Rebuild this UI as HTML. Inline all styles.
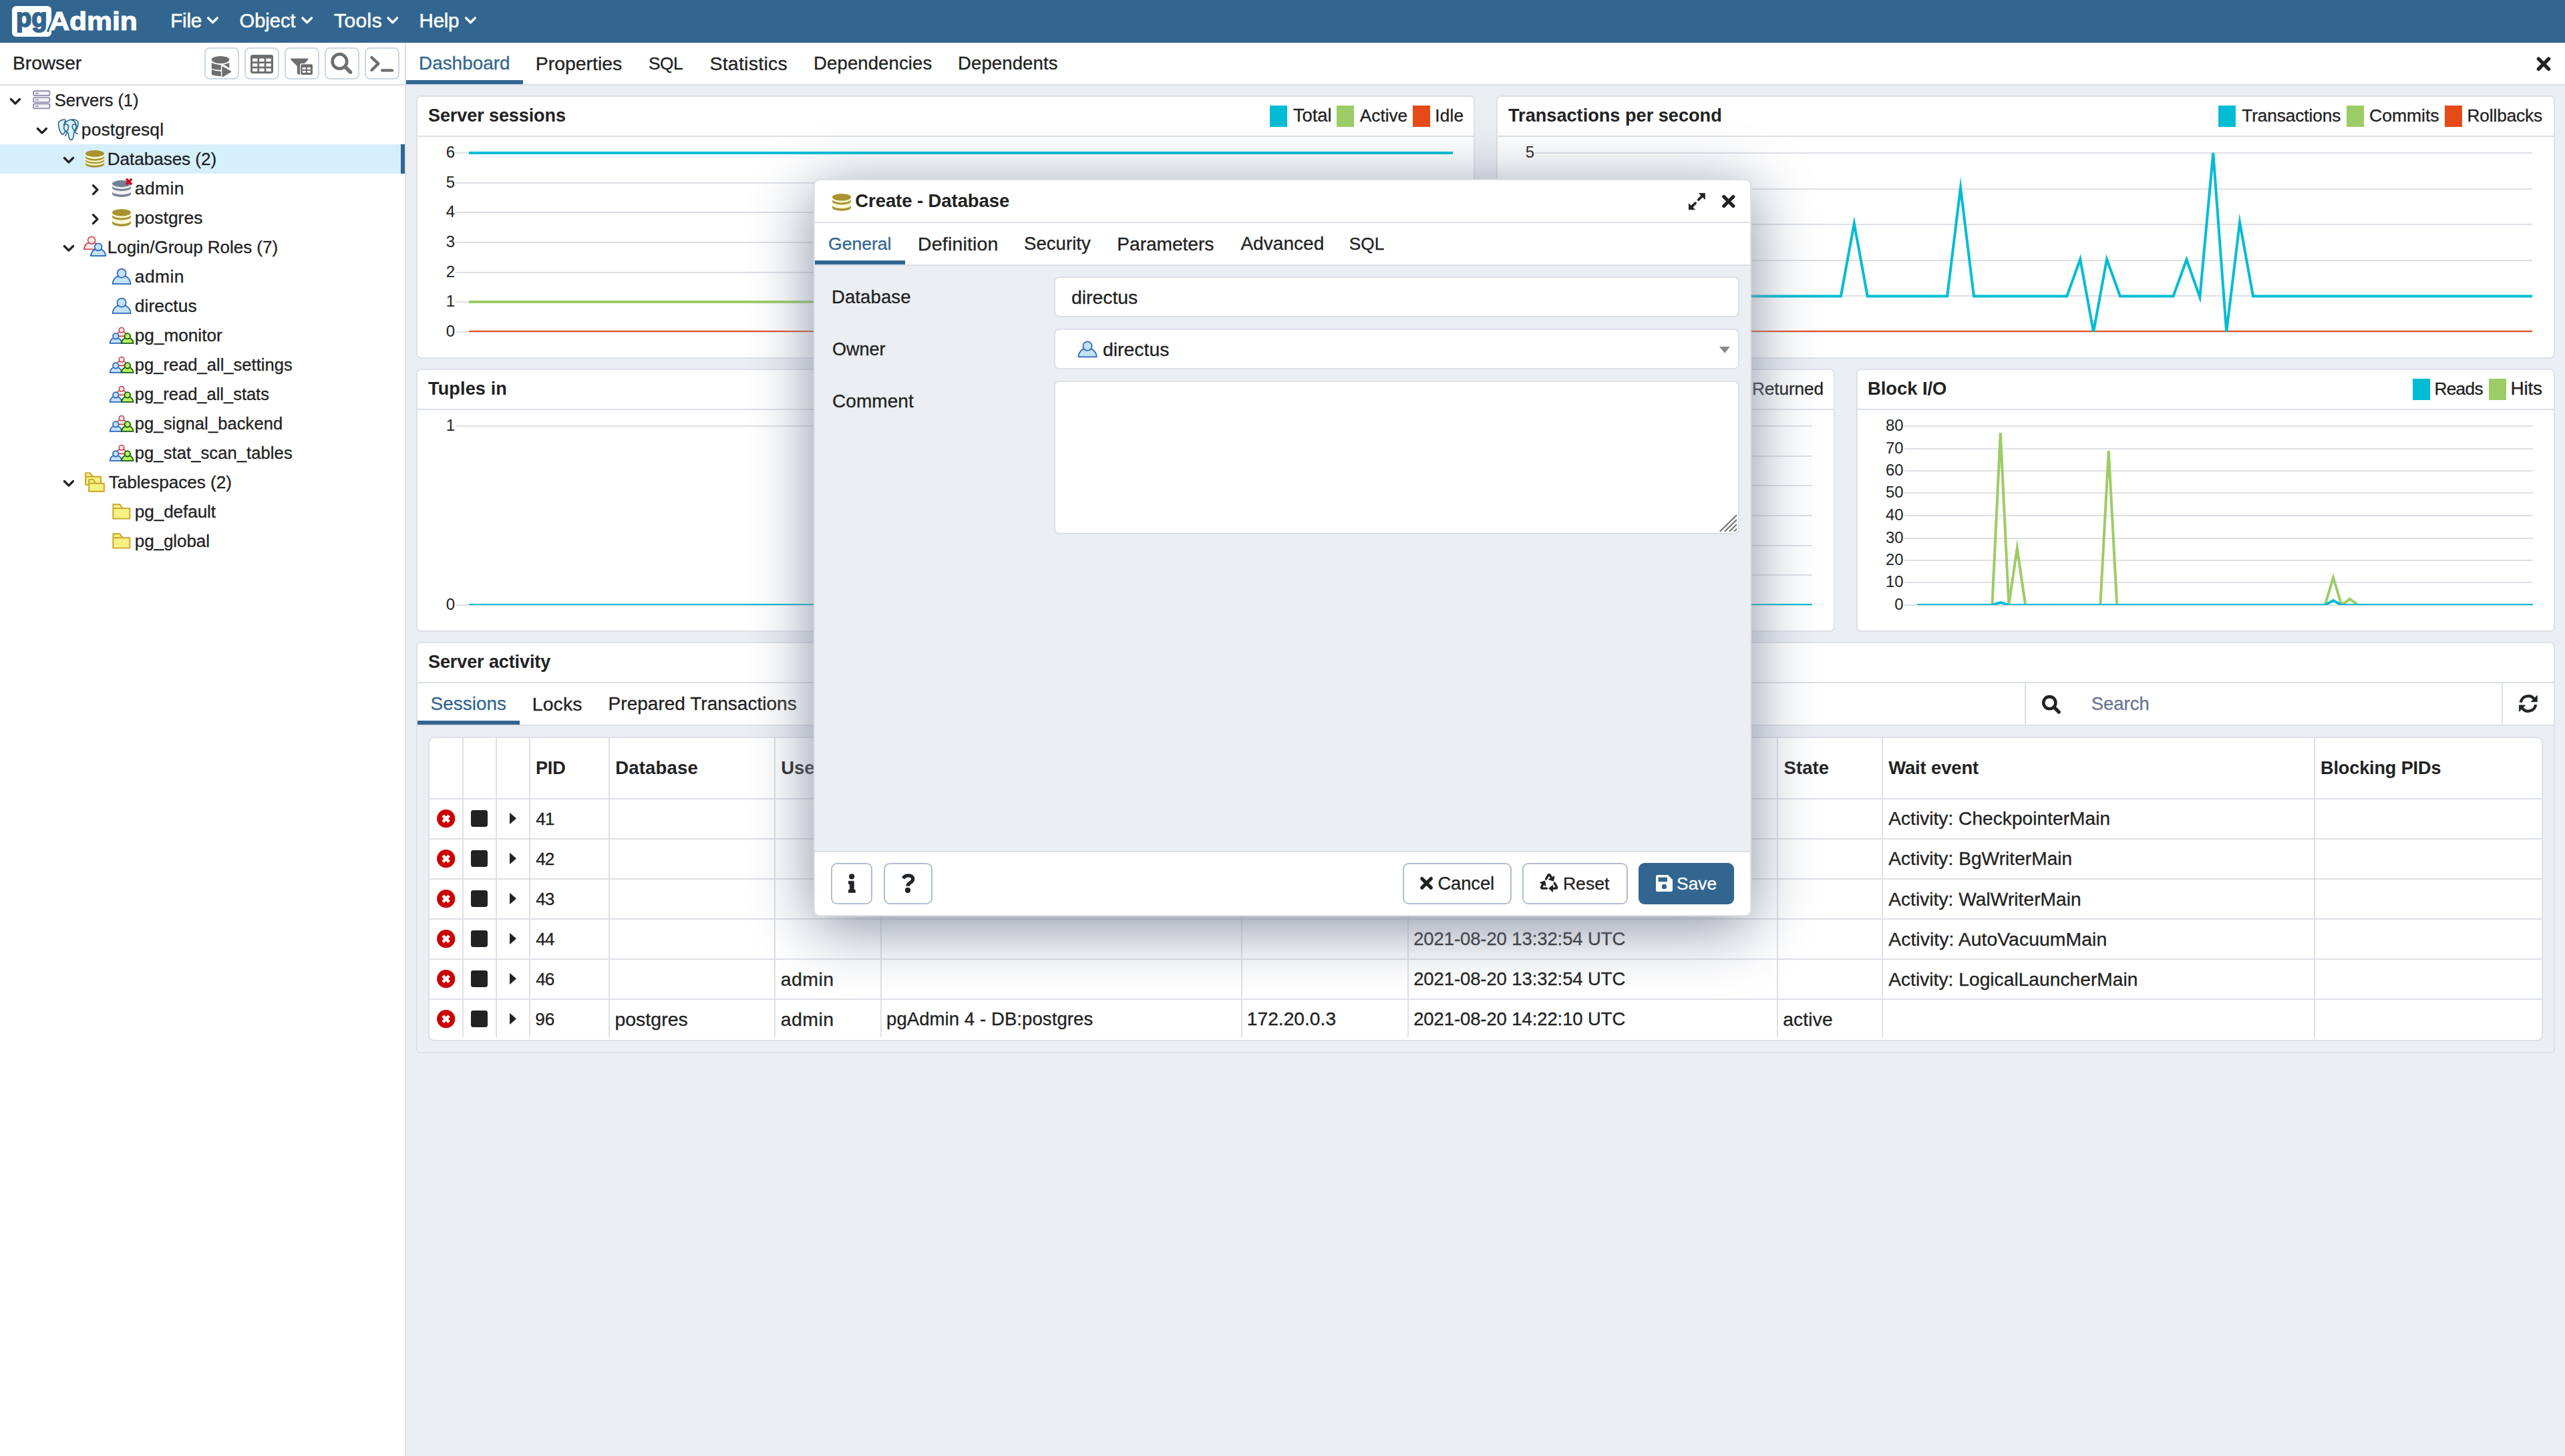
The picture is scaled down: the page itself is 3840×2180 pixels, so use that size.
<!DOCTYPE html>
<html>
<head>
<meta charset="utf-8">
<title>pgAdmin 4</title>
<style>
*{box-sizing:border-box;}
html,body{margin:0;padding:0;}
html{overflow:hidden;background:#ebeef3;}
body{width:3840px;height:2180px;overflow:hidden;background:#ebeef3;font-family:"Liberation Sans",sans-serif;font-size:27.5px;color:#222;position:relative;}
.abs{position:absolute;}
svg{display:block;overflow:visible;}
.t{position:absolute;white-space:pre;-webkit-text-stroke:0.3px currentColor;}
.t.b{-webkit-text-stroke:0;}
#hdr{position:absolute;left:0;top:0;width:3840px;height:64px;background:#326690;}
#logo{position:absolute;left:17.6px;top:8.6px;width:59.2px;height:46.4px;background:#fff;border-radius:6px;}
#left{position:absolute;left:0;top:64px;width:608px;height:2116px;background:#fff;border-right:2px solid #dde0e6;}
#ltitle{position:absolute;left:0;top:64px;width:606px;height:64px;border-bottom:2px solid #dde0e6;}
.tb{position:absolute;width:52px;height:48px;border:2px solid #cdd7e1;border-radius:8px;background:#fff;}
#tabs{position:absolute;left:608px;top:64px;width:3232px;height:64px;background:#fff;border-bottom:2px solid #dde0e6;}
.ul{position:absolute;height:6px;background:#326690;}
.card{position:absolute;background:#fff;border:2px solid #dde0e6;border-radius:7px;}
.ax{font-family:"Liberation Sans",sans-serif;font-size:24px;fill:#222;}

</style>
</head>
<body>
<div id="hdr">
<div id="logo"></div>
<svg class="abs" style="left:0;top:0" width="240" height="64"><text x="23.9" y="39.9" font-family="Liberation Sans" font-weight="700" font-size="39" fill="#326690" stroke="#326690" stroke-width="1.9" textLength="46.6" lengthAdjust="spacingAndGlyphs">pg</text><path d="M71.4 47.6 L84 18" stroke="#326690" stroke-width="3.4" fill="none"/><text x="73.4" y="44.6" font-family="Liberation Sans" font-weight="700" font-size="38.5" fill="#fff" stroke="#fff" stroke-width="1.1" textLength="132.4" lengthAdjust="spacingAndGlyphs">Admin</text></svg>
<span class="t" style="left:255.30px;top:11.20px;line-height:40px;font-size:29.53px;letter-spacing:-0.248px;color:#fff;-webkit-text-stroke:0.55px #fff;">File</span>
<svg class="abs" style="left:0;top:0" width="1" height="1"><path d="M311.75 26.93 L318.50 33.67 L325.25 26.93" fill="none" stroke="#fff" stroke-width="3.5" stroke-linecap="round" stroke-linejoin="round"/></svg>
<span class="t" style="left:358.60px;top:11.20px;line-height:40px;font-size:29px;letter-spacing:0.029px;color:#fff;-webkit-text-stroke:0.55px #fff;">Object</span>
<svg class="abs" style="left:0;top:0" width="1" height="1"><path d="M452.95 26.93 L459.70 33.67 L466.45 26.93" fill="none" stroke="#fff" stroke-width="3.5" stroke-linecap="round" stroke-linejoin="round"/></svg>
<span class="t" style="left:500.00px;top:11.20px;line-height:40px;font-size:30.01px;letter-spacing:0.417px;color:#fff;-webkit-text-stroke:0.55px #fff;">Tools</span>
<svg class="abs" style="left:0;top:0" width="1" height="1"><path d="M581.05 26.93 L587.80 33.67 L594.55 26.93" fill="none" stroke="#fff" stroke-width="3.5" stroke-linecap="round" stroke-linejoin="round"/></svg>
<span class="t" style="left:627.60px;top:11.20px;line-height:40px;font-size:29.51px;letter-spacing:-0.255px;color:#fff;-webkit-text-stroke:0.55px #fff;">Help</span>
<svg class="abs" style="left:0;top:0" width="1" height="1"><path d="M697.65 26.93 L704.40 33.67 L711.15 26.93" fill="none" stroke="#fff" stroke-width="3.5" stroke-linecap="round" stroke-linejoin="round"/></svg></div>
<div id="left"></div>
<div id="ltitle"></div>
<span class="t" style="left:19.00px;top:75.00px;line-height:40px;font-size:28.09px;letter-spacing:0.029px;">Browser</span>
<div class="tb" style="left:306px;top:71px"></div>
<svg class="abs" style="left:306px;top:71px" width="52" height="48" viewBox="0 0 52 48"><ellipse cx="24.05" cy="18.5" rx="13.25" ry="5.5" fill="#6e6e6e"/><path d="M10.8 23.1 Q24.05 29.3 37.3 23.1 V32 Q24.05 35.6 10.8 32 Z" fill="#6e6e6e"/><path d="M10.8 33.1 Q24.05 38.5 37.3 33.1 V39.6 Q37.3 41.2 35.6 41.6 Q24.05 44.6 12.4 41.6 Q10.8 41.2 10.8 39.6 Z" fill="#6e6e6e"/><path d="M24.9 24 L27 24.6 L41.6 33.4 V46 H24.9 Z" fill="#fff"/><path d="M27.1 29.2 L39.5 36.2 L27.1 43.6 Z" fill="#6e6e6e" stroke="#6e6e6e" stroke-width="1.6" stroke-linejoin="round"/></svg>
<div class="tb" style="left:366px;top:71px"></div>
<svg class="abs" style="left:366px;top:71px" width="52" height="48" viewBox="0 0 52 48"><rect x="9" y="11" width="34" height="28" rx="3" fill="#6e6e6e"/><rect x="12.0" y="16.6" width="7.4" height="4.6" fill="#fff"/><rect x="22.2" y="16.6" width="7.4" height="4.6" fill="#fff"/><rect x="32.4" y="16.6" width="7.4" height="4.6" fill="#fff"/><rect x="12.0" y="24.0" width="7.4" height="4.6" fill="#fff"/><rect x="22.2" y="24.0" width="7.4" height="4.6" fill="#fff"/><rect x="32.4" y="24.0" width="7.4" height="4.6" fill="#fff"/><rect x="12.0" y="31.400000000000002" width="7.4" height="4.6" fill="#fff"/><rect x="22.2" y="31.400000000000002" width="7.4" height="4.6" fill="#fff"/><rect x="32.4" y="31.400000000000002" width="7.4" height="4.6" fill="#fff"/></svg>
<div class="tb" style="left:426px;top:71px"></div>
<svg class="abs" style="left:426px;top:71px" width="52" height="48" viewBox="0 0 52 48"><path d="M10.2 16.6 H34.2 C35.4 16.6 35.8 17.6 35 18.5 L25.6 28.4 H23 V40.9 L20 40 C19.2 39.6 18.8 39 18.8 38.2 V28 L9.4 18.5 C8.6 17.6 9 16.6 10.2 16.6 Z" fill="#6e6e6e"/><rect x="23.0" y="24.0" width="20.2" height="18.1" rx="2.6" fill="#fff"/><rect x="24.2" y="25.2" width="17.8" height="15.7" rx="1.8" fill="#6e6e6e"/><rect x="26.6" y="30.0" width="5.2" height="2.9" fill="#fff"/><rect x="33.800000000000004" y="30.0" width="5.2" height="2.9" fill="#fff"/><rect x="26.6" y="34.9" width="5.2" height="2.9" fill="#fff"/><rect x="33.800000000000004" y="34.9" width="5.2" height="2.9" fill="#fff"/></svg>
<div class="tb" style="left:486px;top:71px"></div>
<svg class="abs" style="left:486px;top:71px" width="52" height="48" viewBox="0 0 52 48"><circle cx="22.4" cy="21" r="10.8" fill="none" stroke="#6e6e6e" stroke-width="4.7"/><path d="M30.2 28.8 L39.4 37.8" stroke="#6e6e6e" stroke-width="5.6" stroke-linecap="butt" fill="none"/><circle cx="39.2" cy="37.6" r="2.2" fill="#6e6e6e"/></svg>
<div class="tb" style="left:546px;top:71px"></div>
<svg class="abs" style="left:546px;top:71px" width="52" height="48" viewBox="0 0 52 48"><path d="M10.5 15 L20.4 24.4 L10.5 33.8" stroke="#6e6e6e" stroke-width="4.4" stroke-linecap="round" stroke-linejoin="round" fill="none"/><path d="M26.2 34.4 H41.1" stroke="#6e6e6e" stroke-width="4.4" stroke-linecap="round" fill="none"/></svg>
<svg class="abs" style="left:0;top:0" width="1" height="1"><path d="M16.35 148.53 L22.90 155.08 L29.45 148.53" fill="none" stroke="#222" stroke-width="3.3" stroke-linecap="round" stroke-linejoin="round"/></svg>
<svg class="abs" style="left:48.6px;top:135px" width="28" height="30" viewBox="0 0 28 30"><rect x="1" y="1.2" width="24.5" height="7" rx="2.4" fill="#f2f2f2" stroke="#8a85ad" stroke-width="1.7"/><rect x="4.2" y="3.9000000000000004" width="4.6" height="1.6" fill="#8a85ad"/><rect x="1" y="11.0" width="24.5" height="7" rx="2.4" fill="#f2f2f2" stroke="#8a85ad" stroke-width="1.7"/><rect x="4.2" y="13.7" width="4.6" height="1.6" fill="#8a85ad"/><rect x="1" y="20.4" width="24.5" height="7" rx="2.4" fill="#f2f2f2" stroke="#8a85ad" stroke-width="1.7"/><rect x="4.2" y="23.099999999999998" width="4.6" height="1.6" fill="#8a85ad"/></svg>
<span class="t" style="left:81.80px;top:129.80px;line-height:40px;font-size:25.5px;letter-spacing:-0.041px;">Servers (1)</span>
<svg class="abs" style="left:0;top:0" width="1" height="1"><path d="M56.35 192.53 L62.90 199.08 L69.45 192.53" fill="none" stroke="#222" stroke-width="3.3" stroke-linecap="round" stroke-linejoin="round"/></svg>
<svg class="abs" style="left:86.50px;top:178.10px" width="31" height="32.2" viewBox="0 0 31 32.2"><path d="M11.00 2.30 C10.17 0.77 10.23 0.73 7.10 1.40 C3.97 2.07 3.77 1.87 1.60 4.30 C-0.57 6.73 0.57 5.30 0.60 8.70 C0.63 12.10 0.73 10.87 1.70 14.50 C2.67 18.13 2.00 16.77 3.50 19.60 C5.00 22.43 4.40 22.37 6.20 23.00 C8.00 23.63 7.50 22.83 8.90 21.50 C10.30 20.17 10.37 22.17 10.40 19.00 C10.43 15.83 9.27 16.33 9.00 12.00 C8.73 7.67 8.93 9.23 9.60 6.00 C10.27 2.77 11.83 3.83 11.00 2.30 Z" fill="#dff3fb" stroke="#2c6a96" stroke-width="1.7" stroke-linejoin="round" stroke-linecap="round"/><path d="M20.70 1.60 C20.70 0.37 22.23 0.63 25.00 1.30 C27.77 1.97 27.37 1.70 29.00 3.60 C30.63 5.50 29.90 4.17 29.90 7.00 C29.90 9.83 29.80 9.20 29.00 12.10 C28.20 15.00 28.47 14.00 27.50 15.70 C26.53 17.40 26.30 18.77 26.10 17.20 C25.90 15.63 27.27 15.07 26.90 11.00 C26.53 6.93 27.07 8.13 25.00 5.00 C22.93 1.87 20.70 2.83 20.70 1.60 Z" fill="#dff3fb" stroke="#2c6a96" stroke-width="1.7" stroke-linejoin="round" stroke-linecap="round"/><path d="M16.80 1.70 C13.13 3.00 13.23 2.93 10.60 6.00 C7.97 9.07 9.37 7.67 8.90 10.90 C8.43 14.13 8.30 13.10 9.20 15.70 C10.10 18.30 9.78 16.90 11.60 18.70 C13.42 20.50 13.22 19.07 14.65 21.10 C16.08 23.13 15.28 22.27 15.90 24.80 C16.52 27.33 15.50 26.50 16.50 28.70 C17.50 30.90 17.20 31.00 18.90 31.40 C20.60 31.80 20.20 31.80 21.60 29.90 C23.00 28.00 22.40 28.63 23.10 25.70 C23.80 22.77 23.10 23.63 23.70 21.10 C24.30 18.57 24.00 20.10 24.90 18.10 C25.80 16.10 25.70 17.50 26.40 15.10 C27.10 12.70 27.40 14.13 27.00 10.90 C26.60 7.67 27.00 8.33 25.20 5.40 C23.40 2.47 24.40 3.33 21.60 2.10 C18.80 0.87 20.47 0.40 16.80 1.70 Z" fill="#dff3fb" stroke="#2c6a96" stroke-width="1.7" stroke-linejoin="round" stroke-linecap="round"/><path d="M9.80 8.60 C10.80 8.47 10.97 7.63 12.80 8.20 C14.63 8.77 14.47 8.60 15.30 10.30 C16.13 12.00 15.73 11.10 15.30 13.30 C14.87 15.50 14.83 14.87 14.00 16.90 C13.17 18.93 13.20 18.57 12.80 19.40" fill="none" stroke="#2c6a96" stroke-width="1.7" stroke-linejoin="round" stroke-linecap="round"/><path d="M25.60 8.60 C24.60 8.57 24.03 7.73 22.60 8.50 C21.17 9.27 21.43 8.90 21.30 10.90 C21.17 12.90 21.20 12.30 22.20 14.50 C23.20 16.70 23.17 16.27 24.30 17.50 C25.43 18.73 25.17 17.97 25.60 18.20" fill="none" stroke="#2c6a96" stroke-width="1.7" stroke-linejoin="round" stroke-linecap="round"/><path d="M12.8 21.1 Q12.4 23.6 10.7 25.1 M24.9 19 Q26.4 21.4 28.9 22.4" fill="none" stroke="#2c6a96" stroke-width="1.7" stroke-linejoin="round" stroke-linecap="round"/></svg>
<span class="t" style="left:121.80px;top:173.80px;line-height:40px;font-size:26.39px;letter-spacing:0.175px;">postgresql</span>
<div class="abs" style="left:0;top:216px;width:606px;height:44px;background:#d6effc;border-right:6px solid #326690"></div>
<svg class="abs" style="left:0;top:0" width="1" height="1"><path d="M96.35 236.53 L102.90 243.08 L109.45 236.53" fill="none" stroke="#222" stroke-width="3.3" stroke-linecap="round" stroke-linejoin="round"/></svg>
<svg class="abs" style="left:128px;top:225.00px" width="28" height="25.8" viewBox="0 0 28 26" preserveAspectRatio="none"><path d="M0 14 V20.9 A14 5.1 0 0 0 28 20.9 V14 Z" fill="#a9922f"/><path d="M0 12 V17.9 A14 5.1 0 0 0 28 17.9 V12 Z" fill="#fafad2"/><path d="M0 10 V15.3 A14 5.1 0 0 0 28 15.3 V10 Z" fill="#a9922f"/><path d="M0 8 V13.1 A14 5.1 0 0 0 28 13.1 V8 Z" fill="#fafad2"/><path d="M0 6 V10.7 A14 5.1 0 0 0 28 10.7 V6 Z" fill="#a9922f"/><path d="M0 4.9 V8.0 A14 5.1 0 0 0 28 8.0 V4.9 Z" fill="#fafad2"/><ellipse cx="14" cy="5.0" rx="14" ry="5.0" fill="#a9922f"/></svg>
<span class="t" style="left:160.80px;top:217.80px;line-height:40px;font-size:26.14px;letter-spacing:-0.065px;">Databases (2)</span>
<svg class="abs" style="left:0;top:0" width="1" height="1"><path d="M139.45 277.65 L145.90 284.10 L139.45 290.55" fill="none" stroke="#222" stroke-width="3.3" stroke-linecap="round" stroke-linejoin="round"/></svg>
<svg class="abs" style="left:167.5px;top:270.00px" width="28" height="25" viewBox="0 0 28 26" preserveAspectRatio="none"><path d="M0 12 V20.8 A14 5.1 0 0 0 28 20.8 V12 Z" fill="#718294"/><path d="M0 10 V17.3 A14 5.1 0 0 0 28 17.3 V10 Z" fill="#f2f2f2"/><path d="M0 6 V11.5 A14 5.1 0 0 0 28 11.5 V6 Z" fill="#718294"/><path d="M0 5 V8.4 A14 5.1 0 0 0 28 8.4 V5 Z" fill="#f2f2f2"/><ellipse cx="14" cy="5.3" rx="14" ry="5.25" fill="#718294"/><path d="M21 -2.2 L29.2 6.4 M29.2 -2.2 L21 6.4" stroke="#d6001c" stroke-width="3.5" fill="none"/></svg>
<span class="t" style="left:201.80px;top:261.80px;line-height:40px;font-size:26.39px;letter-spacing:0.433px;">admin</span>
<svg class="abs" style="left:0;top:0" width="1" height="1"><path d="M139.45 321.65 L145.90 328.10 L139.45 334.55" fill="none" stroke="#222" stroke-width="3.3" stroke-linecap="round" stroke-linejoin="round"/></svg>
<svg class="abs" style="left:168px;top:313.00px" width="28" height="26.0" viewBox="0 0 28 26" preserveAspectRatio="none"><path d="M0 12 V20.8 A14 5.1 0 0 0 28 20.8 V12 Z" fill="#a9922f"/><path d="M0 10 V17.3 A14 5.1 0 0 0 28 17.3 V10 Z" fill="#fafad2"/><path d="M0 6 V11.5 A14 5.1 0 0 0 28 11.5 V6 Z" fill="#a9922f"/><path d="M0 5 V8.4 A14 5.1 0 0 0 28 8.4 V5 Z" fill="#fafad2"/><ellipse cx="14" cy="5.3" rx="14" ry="5.25" fill="#a9922f"/></svg>
<span class="t" style="left:201.80px;top:305.80px;line-height:40px;font-size:26.39px;letter-spacing:0.061px;">postgres</span>
<svg class="abs" style="left:0;top:0" width="1" height="1"><path d="M96.35 368.52 L102.90 375.07 L109.45 368.52" fill="none" stroke="#222" stroke-width="3.3" stroke-linecap="round" stroke-linejoin="round"/></svg>
<svg class="abs" style="left:0;top:0" width="1" height="1"><path d="M125.90 373.20 A11.20 10.75 0 0 1 148.30 373.20 Z" fill="#fdeaea" stroke="#c9404a" stroke-width="1.6" stroke-linejoin="miter"/><circle cx="137.10" cy="359.76" r="5.49" fill="#fdeaea" stroke="#c9404a" stroke-width="1.6"/><path d="M136.00 383.10 A11.10 10.66 0 0 1 158.20 383.10 Z" fill="#c3e3f3" stroke="#2b63c4" stroke-width="1.7" stroke-linejoin="miter"/><circle cx="147.10" cy="369.78" r="5.44" fill="#c3e3f3" stroke="#2b63c4" stroke-width="1.7"/></svg>
<span class="t" style="left:160.80px;top:349.80px;line-height:40px;font-size:26.04px;letter-spacing:-0.042px;">Login/Group Roles (7)</span>
<svg class="abs" style="left:0;top:0" width="1" height="1"><path d="M168.65 425.20 A13.40 12.86 0 0 1 195.45 425.20 Z" fill="#c3e3f3" stroke="#2b63c4" stroke-width="1.7" stroke-linejoin="miter"/><circle cx="182.05" cy="409.12" r="6.57" fill="#c3e3f3" stroke="#2b63c4" stroke-width="1.7"/></svg>
<span class="t" style="left:201.80px;top:393.80px;line-height:40px;font-size:26.39px;letter-spacing:0.433px;">admin</span>
<svg class="abs" style="left:0;top:0" width="1" height="1"><path d="M168.65 469.20 A13.40 12.86 0 0 1 195.45 469.20 Z" fill="#c3e3f3" stroke="#2b63c4" stroke-width="1.7" stroke-linejoin="miter"/><circle cx="182.05" cy="453.12" r="6.57" fill="#c3e3f3" stroke="#2b63c4" stroke-width="1.7"/></svg>
<span class="t" style="left:201.80px;top:437.80px;line-height:40px;font-size:26.39px;letter-spacing:0.062px;">directus</span>
<svg class="abs" style="left:0;top:0" width="1" height="1"><path d="M174.40 503.40 A7.60 7.30 0 0 1 189.60 503.40 Z" fill="#fdeaea" stroke="#c9404a" stroke-width="1.6" stroke-linejoin="miter"/><circle cx="182.00" cy="494.28" r="3.72" fill="#fdeaea" stroke="#c9404a" stroke-width="1.6"/><path d="M164.60 513.80 A8.70 8.35 0 0 1 182.00 513.80 Z" fill="#c3e3f3" stroke="#2b63c4" stroke-width="1.8" stroke-linejoin="miter"/><circle cx="173.30" cy="503.36" r="4.26" fill="#c3e3f3" stroke="#2b63c4" stroke-width="1.8"/><path d="M182.10 513.80 A8.70 8.35 0 0 1 199.50 513.80 Z" fill="#bdf55f" stroke="#0d5a0a" stroke-width="1.8" stroke-linejoin="miter"/><circle cx="190.80" cy="503.36" r="4.26" fill="#bdf55f" stroke="#0d5a0a" stroke-width="1.8"/></svg>
<span class="t" style="left:201.80px;top:481.80px;line-height:40px;font-size:26.13px;letter-spacing:0.022px;">pg_monitor</span>
<svg class="abs" style="left:0;top:0" width="1" height="1"><path d="M174.40 547.40 A7.60 7.30 0 0 1 189.60 547.40 Z" fill="#fdeaea" stroke="#c9404a" stroke-width="1.6" stroke-linejoin="miter"/><circle cx="182.00" cy="538.28" r="3.72" fill="#fdeaea" stroke="#c9404a" stroke-width="1.6"/><path d="M164.60 557.80 A8.70 8.35 0 0 1 182.00 557.80 Z" fill="#c3e3f3" stroke="#2b63c4" stroke-width="1.8" stroke-linejoin="miter"/><circle cx="173.30" cy="547.36" r="4.26" fill="#c3e3f3" stroke="#2b63c4" stroke-width="1.8"/><path d="M182.10 557.80 A8.70 8.35 0 0 1 199.50 557.80 Z" fill="#bdf55f" stroke="#0d5a0a" stroke-width="1.8" stroke-linejoin="miter"/><circle cx="190.80" cy="547.36" r="4.26" fill="#bdf55f" stroke="#0d5a0a" stroke-width="1.8"/></svg>
<span class="t" style="left:201.80px;top:525.80px;line-height:40px;font-size:25.5px;letter-spacing:0.027px;">pg_read_all_settings</span>
<svg class="abs" style="left:0;top:0" width="1" height="1"><path d="M174.40 591.40 A7.60 7.30 0 0 1 189.60 591.40 Z" fill="#fdeaea" stroke="#c9404a" stroke-width="1.6" stroke-linejoin="miter"/><circle cx="182.00" cy="582.28" r="3.72" fill="#fdeaea" stroke="#c9404a" stroke-width="1.6"/><path d="M164.60 601.80 A8.70 8.35 0 0 1 182.00 601.80 Z" fill="#c3e3f3" stroke="#2b63c4" stroke-width="1.8" stroke-linejoin="miter"/><circle cx="173.30" cy="591.36" r="4.26" fill="#c3e3f3" stroke="#2b63c4" stroke-width="1.8"/><path d="M182.10 601.80 A8.70 8.35 0 0 1 199.50 601.80 Z" fill="#bdf55f" stroke="#0d5a0a" stroke-width="1.8" stroke-linejoin="miter"/><circle cx="190.80" cy="591.36" r="4.26" fill="#bdf55f" stroke="#0d5a0a" stroke-width="1.8"/></svg>
<span class="t" style="left:201.80px;top:569.80px;line-height:40px;font-size:25.5px;letter-spacing:-0.010px;">pg_read_all_stats</span>
<svg class="abs" style="left:0;top:0" width="1" height="1"><path d="M174.40 635.40 A7.60 7.30 0 0 1 189.60 635.40 Z" fill="#fdeaea" stroke="#c9404a" stroke-width="1.6" stroke-linejoin="miter"/><circle cx="182.00" cy="626.28" r="3.72" fill="#fdeaea" stroke="#c9404a" stroke-width="1.6"/><path d="M164.60 645.80 A8.70 8.35 0 0 1 182.00 645.80 Z" fill="#c3e3f3" stroke="#2b63c4" stroke-width="1.8" stroke-linejoin="miter"/><circle cx="173.30" cy="635.36" r="4.26" fill="#c3e3f3" stroke="#2b63c4" stroke-width="1.8"/><path d="M182.10 645.80 A8.70 8.35 0 0 1 199.50 645.80 Z" fill="#bdf55f" stroke="#0d5a0a" stroke-width="1.8" stroke-linejoin="miter"/><circle cx="190.80" cy="635.36" r="4.26" fill="#bdf55f" stroke="#0d5a0a" stroke-width="1.8"/></svg>
<span class="t" style="left:201.80px;top:613.80px;line-height:40px;font-size:25.5px;letter-spacing:0.101px;">pg_signal_backend</span>
<svg class="abs" style="left:0;top:0" width="1" height="1"><path d="M174.40 679.40 A7.60 7.30 0 0 1 189.60 679.40 Z" fill="#fdeaea" stroke="#c9404a" stroke-width="1.6" stroke-linejoin="miter"/><circle cx="182.00" cy="670.28" r="3.72" fill="#fdeaea" stroke="#c9404a" stroke-width="1.6"/><path d="M164.60 689.80 A8.70 8.35 0 0 1 182.00 689.80 Z" fill="#c3e3f3" stroke="#2b63c4" stroke-width="1.8" stroke-linejoin="miter"/><circle cx="173.30" cy="679.36" r="4.26" fill="#c3e3f3" stroke="#2b63c4" stroke-width="1.8"/><path d="M182.10 689.80 A8.70 8.35 0 0 1 199.50 689.80 Z" fill="#bdf55f" stroke="#0d5a0a" stroke-width="1.8" stroke-linejoin="miter"/><circle cx="190.80" cy="679.36" r="4.26" fill="#bdf55f" stroke="#0d5a0a" stroke-width="1.8"/></svg>
<span class="t" style="left:201.80px;top:657.80px;line-height:40px;font-size:25.5px;letter-spacing:0.107px;">pg_stat_scan_tables</span>
<svg class="abs" style="left:0;top:0" width="1" height="1"><path d="M96.35 720.52 L102.90 727.07 L109.45 720.52" fill="none" stroke="#222" stroke-width="3.3" stroke-linecap="round" stroke-linejoin="round"/></svg>
<svg class="abs" style="left:0;top:0" width="1" height="1"><path d="M128.15 725.90 V708.10 H134.75 L138.95 713.70 H151.05 V725.90 Z" fill="#f5f282" stroke="#c9a227" stroke-width="1.9" stroke-linejoin="round"/><path d="M128.15 713.70 H138.95" stroke="#c9a227" stroke-width="1.9" fill="none"/><path d="M133.15 735.80 V718.10 H139.55 L143.75 723.70 H155.85 V735.80 Z" fill="#f5f282" stroke="#c9a227" stroke-width="1.9" stroke-linejoin="round"/><path d="M133.15 723.70 H143.75" stroke="#c9a227" stroke-width="1.9" fill="none"/></svg>
<span class="t" style="left:162.80px;top:701.80px;line-height:40px;font-size:26.2px;letter-spacing:-0.053px;">Tablespaces (2)</span>
<svg class="abs" style="left:0;top:0" width="1" height="1"><path d="M169.35 776.60 V755.20 H179.32 L183.75 761.10 H194.35 V776.60 Z" fill="#f5f282" stroke="#c9a227" stroke-width="1.9" stroke-linejoin="round"/><path d="M169.35 761.10 H183.75" stroke="#c9a227" stroke-width="1.9" fill="none"/></svg>
<span class="t" style="left:201.80px;top:745.80px;line-height:40px;font-size:26.14px;letter-spacing:-0.085px;">pg_default</span>
<svg class="abs" style="left:0;top:0" width="1" height="1"><path d="M169.35 820.60 V799.20 H179.32 L183.75 805.10 H194.35 V820.60 Z" fill="#f5f282" stroke="#c9a227" stroke-width="1.9" stroke-linejoin="round"/><path d="M169.35 805.10 H183.75" stroke="#c9a227" stroke-width="1.9" fill="none"/></svg>
<span class="t" style="left:201.80px;top:789.80px;line-height:40px;font-size:26.08px;letter-spacing:-0.115px;">pg_global</span>
<div id="tabs"></div>
<div class="ul" style="left:608px;top:120px;width:175px"></div>
<span class="t" style="left:627.00px;top:75.00px;line-height:40px;font-size:27.87px;letter-spacing:0.025px;color:#326690;">Dashboard</span>
<span class="t" style="left:801.80px;top:75.00px;line-height:40px;font-size:28.46px;letter-spacing:-0.028px;">Properties</span>
<span class="t" style="left:971.00px;top:75.00px;line-height:40px;font-size:26.26px;letter-spacing:-0.463px;">SQL</span>
<span class="t" style="left:1062.40px;top:75.00px;line-height:40px;font-size:28.46px;letter-spacing:0.276px;">Statistics</span>
<span class="t" style="left:1218.10px;top:75.00px;line-height:40px;font-size:27.5px;letter-spacing:0.112px;">Dependencies</span>
<span class="t" style="left:1434.00px;top:75.00px;line-height:40px;font-size:27.5px;letter-spacing:0.127px;">Dependents</span>
<svg class="abs" style="left:0;top:0" width="1" height="1"><path d="M3800.4 88.2 L3815.6 103.39999999999999 M3815.6 88.2 L3800.4 103.39999999999999" stroke="#222" stroke-width="5.4" stroke-linecap="round" fill="none"/></svg>
<div class="card" style="left:623.00px;top:143px;width:1585.00px;height:394px"></div>
<div class="abs" style="left:625.00px;top:203px;width:1581.00px;height:2px;background:#dde0e6"></div>
<span class="t b" style="left:641.00px;top:153.40px;line-height:40px;font-size:27.09px;font-weight:700;letter-spacing:-0.127px;">Server sessions</span>
<div class="abs" style="left:1901.0px;top:158px;width:26px;height:32px;background:#00bcd4"></div>
<span class="t" style="left:1936.00px;top:153.20px;line-height:40px;font-size:27.5px;letter-spacing:-0.145px;">Total</span>
<div class="abs" style="left:2001.0px;top:158px;width:26px;height:32px;background:#9ccc65"></div>
<span class="t" style="left:2035.80px;top:153.20px;line-height:40px;font-size:26.26px;letter-spacing:-0.017px;">Active</span>
<div class="abs" style="left:2115.0px;top:158px;width:26px;height:32px;background:#e64a19"></div>
<span class="t" style="left:2148.30px;top:153.20px;line-height:40px;font-size:26.26px;letter-spacing:0.125px;">Idle</span>
<svg class="abs" style="left:0;top:0" width="3840" height="1000"><rect x="682" y="228" width="1493.00" height="2" fill="#dde0e6"/><text x="681.2" y="236.20" text-anchor="end" class="ax">6</text><rect x="682" y="273" width="1493.00" height="2" fill="#dde0e6"/><text x="681.2" y="281.20" text-anchor="end" class="ax">5</text><rect x="682" y="317" width="1493.00" height="2" fill="#dde0e6"/><text x="681.2" y="325.20" text-anchor="end" class="ax">4</text><rect x="682" y="362" width="1493.00" height="2" fill="#dde0e6"/><text x="681.2" y="370.20" text-anchor="end" class="ax">3</text><rect x="682" y="407" width="1493.00" height="2" fill="#dde0e6"/><text x="681.2" y="415.20" text-anchor="end" class="ax">2</text><rect x="682" y="451" width="1493.00" height="2" fill="#dde0e6"/><text x="681.2" y="459.20" text-anchor="end" class="ax">1</text><rect x="682" y="496" width="1493.00" height="2" fill="#dde0e6"/><text x="681.2" y="504.20" text-anchor="end" class="ax">0</text><clipPath id="c1"><rect x="700" y="227" width="1477.00" height="270"/></clipPath><g clip-path="url(#c1)"><path d="M702.00 497.00 L2175.00 497.00" fill="none" stroke="#e64a19" stroke-width="4" stroke-linejoin="miter" stroke-miterlimit="10"/><path d="M702.00 452.00 L2175.00 452.00" fill="none" stroke="#9ccc65" stroke-width="4" stroke-linejoin="miter" stroke-miterlimit="10"/><path d="M702.00 229.00 L2175.00 229.00" fill="none" stroke="#00bcd4" stroke-width="4" stroke-linejoin="miter" stroke-miterlimit="10"/></g></svg>
<div class="card" style="left:2240.00px;top:143px;width:1585.00px;height:394px"></div>
<div class="abs" style="left:2242.00px;top:203px;width:1581.00px;height:2px;background:#dde0e6"></div>
<span class="t b" style="left:2258.00px;top:153.40px;line-height:40px;font-size:27.16px;font-weight:700;letter-spacing:-0.007px;">Transactions per second</span>
<div class="abs" style="left:3321.0px;top:158px;width:26px;height:32px;background:#00bcd4"></div>
<span class="t" style="left:3356.30px;top:153.20px;line-height:40px;font-size:26.26px;letter-spacing:-0.116px;">Transactions</span>
<div class="abs" style="left:3512.8px;top:158px;width:26px;height:32px;background:#9ccc65"></div>
<span class="t" style="left:3547.00px;top:153.20px;line-height:40px;font-size:26.62px;letter-spacing:-0.059px;">Commits</span>
<div class="abs" style="left:3660.3px;top:158px;width:26px;height:32px;background:#e64a19"></div>
<span class="t" style="left:3693.50px;top:153.20px;line-height:40px;font-size:26.26px;letter-spacing:-0.133px;">Rollbacks</span>
<svg class="abs" style="left:0;top:0" width="3840" height="1000"><rect x="2298" y="228" width="1493.00" height="2" fill="#dde0e6"/><text x="2297.2" y="236.20" text-anchor="end" class="ax">5</text><rect x="2298" y="282" width="1493.00" height="2" fill="#dde0e6"/><text x="2297.2" y="290.20" text-anchor="end" class="ax">4</text><rect x="2298" y="335" width="1493.00" height="2" fill="#dde0e6"/><text x="2297.2" y="343.20" text-anchor="end" class="ax">3</text><rect x="2298" y="389" width="1493.00" height="2" fill="#dde0e6"/><text x="2297.2" y="397.20" text-anchor="end" class="ax">2</text><rect x="2298" y="442" width="1493.00" height="2" fill="#dde0e6"/><text x="2297.2" y="450.20" text-anchor="end" class="ax">1</text><rect x="2298" y="496" width="1493.00" height="2" fill="#dde0e6"/><text x="2297.2" y="504.20" text-anchor="end" class="ax">0</text><clipPath id="c2"><rect x="2316" y="227" width="1477.00" height="270"/></clipPath><g clip-path="url(#c2)"><path d="M2318.00 497.00 L3791.00 497.00" fill="none" stroke="#e64a19" stroke-width="4" stroke-linejoin="miter" stroke-miterlimit="10"/><path d="M2318.00 443.40 L2337.91 443.40 L2357.81 443.40 L2377.72 443.40 L2397.62 443.40 L2417.53 389.80 L2437.43 443.40 L2457.34 443.40 L2477.24 443.40 L2497.15 443.40 L2517.05 443.40 L2536.96 443.40 L2556.86 443.40 L2576.77 336.20 L2596.68 443.40 L2616.58 443.40 L2636.49 443.40 L2656.39 443.40 L2676.30 443.40 L2696.20 443.40 L2716.11 443.40 L2736.01 443.40 L2755.92 443.40 L2775.82 334.59 L2795.73 443.40 L2815.64 443.40 L2835.54 443.40 L2855.45 443.40 L2875.35 443.40 L2895.26 443.40 L2915.16 443.40 L2935.07 280.99 L2954.97 443.40 L2974.88 443.40 L2994.78 443.40 L3014.69 443.40 L3034.59 443.40 L3054.50 443.40 L3074.41 443.40 L3094.31 443.40 L3114.22 388.19 L3134.12 497.00 L3154.03 388.19 L3173.93 443.40 L3193.84 443.40 L3213.74 443.40 L3233.65 443.40 L3253.55 443.40 L3273.46 388.73 L3293.36 445.01 L3313.27 229.00 L3333.18 497.00 L3353.08 332.98 L3372.99 443.40 L3392.89 443.40 L3412.80 443.40 L3432.70 443.40 L3452.61 443.40 L3472.51 443.40 L3492.42 443.40 L3512.32 443.40 L3532.23 443.40 L3552.14 443.40 L3572.04 443.40 L3591.95 443.40 L3611.85 443.40 L3631.76 443.40 L3651.66 443.40 L3671.57 443.40 L3691.47 443.40 L3711.38 443.40 L3731.28 443.40 L3751.19 443.40 L3771.09 443.40 L3791.00 443.40" fill="none" stroke="#00bcd4" stroke-width="4" stroke-linejoin="miter" stroke-miterlimit="10"/></g></svg>
<div class="card" style="left:623.00px;top:552px;width:1046.00px;height:394px"></div>
<div class="abs" style="left:625.00px;top:612px;width:1042.00px;height:2px;background:#dde0e6"></div>
<span class="t b" style="left:641.00px;top:562.40px;line-height:40px;font-size:27.14px;font-weight:700;letter-spacing:0.103px;">Tuples in</span>
<svg class="abs" style="left:0;top:0" width="3840" height="1000"><rect x="682" y="637" width="953.00" height="2" fill="#dde0e6"/><text x="681.2" y="645.20" text-anchor="end" class="ax">1</text><rect x="682" y="905" width="953.00" height="2" fill="#dde0e6"/><text x="681.2" y="913.20" text-anchor="end" class="ax">0</text><clipPath id="c3"><rect x="700" y="636" width="937.00" height="270"/></clipPath><g clip-path="url(#c3)"><path d="M702.00 906.00 L1635.00 906.00" fill="none" stroke="#00bcd4" stroke-width="4" stroke-linejoin="miter" stroke-miterlimit="10"/></g></svg>
<div class="card" style="left:1701.00px;top:552px;width:1046.00px;height:394px"></div>
<div class="abs" style="left:1703.00px;top:612px;width:1042.00px;height:2px;background:#dde0e6"></div>
<span class="t b" style="left:1719.00px;top:562.40px;line-height:40px;font-size:27.5px;font-weight:700;">Tuples out</span>
<div class="abs" style="left:2440.0px;top:567px;width:26px;height:32px;background:#00bcd4"></div>
<span class="t" style="left:2473.00px;top:562.20px;line-height:40px;font-size:27.5px;">Fetched</span>
<div class="abs" style="left:2590.0px;top:567px;width:26px;height:32px;background:#9ccc65"></div>
<span class="t" style="left:2623.00px;top:562.20px;line-height:40px;font-size:26.26px;letter-spacing:-0.127px;">Returned</span>
<svg class="abs" style="left:0;top:0" width="3840" height="1000"><rect x="1779" y="637" width="934.00" height="2" fill="#dde0e6"/><rect x="1779" y="682" width="934.00" height="2" fill="#dde0e6"/><rect x="1779" y="726" width="934.00" height="2" fill="#dde0e6"/><rect x="1779" y="771" width="934.00" height="2" fill="#dde0e6"/><rect x="1779" y="816" width="934.00" height="2" fill="#dde0e6"/><rect x="1779" y="860" width="934.00" height="2" fill="#dde0e6"/><rect x="1779" y="905" width="934.00" height="2" fill="#dde0e6"/><clipPath id="c4"><rect x="1797" y="636" width="918.00" height="270"/></clipPath><g clip-path="url(#c4)"><path d="M1799.00 906.00 L2713.00 906.00" fill="none" stroke="#00bcd4" stroke-width="4" stroke-linejoin="miter" stroke-miterlimit="10"/></g></svg>
<div class="card" style="left:2779.00px;top:552px;width:1046.00px;height:394px"></div>
<div class="abs" style="left:2781.00px;top:612px;width:1042.00px;height:2px;background:#dde0e6"></div>
<span class="t b" style="left:2796.00px;top:562.40px;line-height:40px;font-size:27.5px;font-weight:700;letter-spacing:-0.101px;">Block I/O</span>
<div class="abs" style="left:3612.0px;top:567px;width:26px;height:32px;background:#00bcd4"></div>
<span class="t" style="left:3644.40px;top:562.20px;line-height:40px;font-size:26.26px;letter-spacing:-0.688px;">Reads</span>
<div class="abs" style="left:3726.0px;top:567px;width:26px;height:32px;background:#9ccc65"></div>
<span class="t" style="left:3758.50px;top:562.20px;line-height:40px;font-size:28.05px;letter-spacing:-0.259px;">Hits</span>
<svg class="abs" style="left:0;top:0" width="3840" height="1000"><rect x="2851" y="637" width="941.00" height="2" fill="#dde0e6"/><text x="2849.6" y="645.20" text-anchor="end" class="ax">80</text><rect x="2851" y="671" width="941.00" height="2" fill="#dde0e6"/><text x="2849.6" y="679.20" text-anchor="end" class="ax">70</text><rect x="2851" y="704" width="941.00" height="2" fill="#dde0e6"/><text x="2849.6" y="712.20" text-anchor="end" class="ax">60</text><rect x="2851" y="737" width="941.00" height="2" fill="#dde0e6"/><text x="2849.6" y="745.20" text-anchor="end" class="ax">50</text><rect x="2851" y="771" width="941.00" height="2" fill="#dde0e6"/><text x="2849.6" y="779.20" text-anchor="end" class="ax">40</text><rect x="2851" y="805" width="941.00" height="2" fill="#dde0e6"/><text x="2849.6" y="813.20" text-anchor="end" class="ax">30</text><rect x="2851" y="838" width="941.00" height="2" fill="#dde0e6"/><text x="2849.6" y="846.20" text-anchor="end" class="ax">20</text><rect x="2851" y="871" width="941.00" height="2" fill="#dde0e6"/><text x="2849.6" y="879.20" text-anchor="end" class="ax">10</text><rect x="2851" y="905" width="941.00" height="2" fill="#dde0e6"/><text x="2849.6" y="913.20" text-anchor="end" class="ax">0</text><clipPath id="c5"><rect x="2868.3" y="636" width="925.70" height="270"/></clipPath><g clip-path="url(#c5)"><path d="M2870.30 906.00 L2882.76 906.00 L2895.21 906.00 L2907.67 906.00 L2920.12 906.00 L2932.58 906.00 L2945.03 906.00 L2957.49 906.00 L2969.94 906.00 L2982.40 906.00 L2994.85 648.05 L3007.31 906.00 L3019.76 820.91 L3032.22 906.00 L3044.68 906.00 L3057.13 906.00 L3069.59 906.00 L3082.04 906.00 L3094.50 906.00 L3106.95 906.00 L3119.41 906.00 L3131.86 906.00 L3144.32 906.00 L3156.77 674.85 L3169.23 906.00 L3181.69 906.00 L3194.14 906.00 L3206.60 906.00 L3219.05 906.00 L3231.51 906.00 L3243.96 906.00 L3256.42 906.00 L3268.87 906.00 L3281.33 906.00 L3293.78 906.00 L3306.24 906.00 L3318.69 906.00 L3331.15 906.00 L3343.61 906.00 L3356.06 906.00 L3368.52 906.00 L3380.97 906.00 L3393.43 906.00 L3405.88 906.00 L3418.34 906.00 L3430.79 906.00 L3443.25 906.00 L3455.70 906.00 L3468.16 906.00 L3480.61 906.00 L3493.07 864.79 L3505.53 906.00 L3517.98 896.79 L3530.44 906.00 L3542.89 906.00 L3555.35 906.00 L3567.80 906.00 L3580.26 906.00 L3592.71 906.00 L3605.17 906.00 L3617.62 906.00 L3630.08 906.00 L3642.54 906.00 L3654.99 906.00 L3667.45 906.00 L3679.90 906.00 L3692.36 906.00 L3704.81 906.00 L3717.27 906.00 L3729.72 906.00 L3742.18 906.00 L3754.63 906.00 L3767.09 906.00 L3779.54 906.00 L3792.00 906.00" fill="none" stroke="#9ccc65" stroke-width="4" stroke-linejoin="miter" stroke-miterlimit="10"/><path d="M2870.30 906.00 L2882.76 906.00 L2895.21 906.00 L2907.67 906.00 L2920.12 906.00 L2932.58 906.00 L2945.03 906.00 L2957.49 906.00 L2969.94 906.00 L2982.40 906.00 L2994.85 901.98 L3007.31 906.00 L3019.76 906.00 L3032.22 906.00 L3044.68 906.00 L3057.13 906.00 L3069.59 906.00 L3082.04 906.00 L3094.50 906.00 L3106.95 906.00 L3119.41 906.00 L3131.86 906.00 L3144.32 906.00 L3156.77 906.00 L3169.23 906.00 L3181.69 906.00 L3194.14 906.00 L3206.60 906.00 L3219.05 906.00 L3231.51 906.00 L3243.96 906.00 L3256.42 906.00 L3268.87 906.00 L3281.33 906.00 L3293.78 906.00 L3306.24 906.00 L3318.69 906.00 L3331.15 906.00 L3343.61 906.00 L3356.06 906.00 L3368.52 906.00 L3380.97 906.00 L3393.43 906.00 L3405.88 906.00 L3418.34 906.00 L3430.79 906.00 L3443.25 906.00 L3455.70 906.00 L3468.16 906.00 L3480.61 906.00 L3493.07 899.10 L3505.53 906.00 L3517.98 906.00 L3530.44 906.00 L3542.89 906.00 L3555.35 906.00 L3567.80 906.00 L3580.26 906.00 L3592.71 906.00 L3605.17 906.00 L3617.62 906.00 L3630.08 906.00 L3642.54 906.00 L3654.99 906.00 L3667.45 906.00 L3679.90 906.00 L3692.36 906.00 L3704.81 906.00 L3717.27 906.00 L3729.72 906.00 L3742.18 906.00 L3754.63 906.00 L3767.09 906.00 L3779.54 906.00 L3792.00 906.00" fill="none" stroke="#00bcd4" stroke-width="4" stroke-linejoin="miter" stroke-miterlimit="10"/></g></svg>
<div class="card" style="left:623.00px;top:961px;width:3202.00px;height:616px"></div>
<div class="abs" style="left:625.00px;top:1021px;width:3198.00px;height:2px;background:#dde0e6"></div>
<span class="t b" style="left:641.00px;top:971.40px;line-height:40px;font-size:27.09px;font-weight:700;letter-spacing:-0.136px;">Server activity</span>
<div class="abs" style="left:625px;top:1023px;width:3198px;height:62px;background:#fff"></div>
<div class="abs" style="left:625px;top:1085px;width:3198px;height:2px;background:#dde0e6"></div>
<div class="abs" style="left:625px;top:1087px;width:3198px;height:488px;background:#ebeef3;border-radius:0 0 7px 7px"></div>
<div class="ul" style="left:625px;top:1079px;width:153px"></div>
<span class="t" style="left:644.50px;top:1033.80px;line-height:40px;font-size:27.92px;letter-spacing:0.031px;color:#326690;">Sessions</span>
<span class="t" style="left:796.70px;top:1033.80px;line-height:40px;font-size:28.46px;letter-spacing:0.125px;">Locks</span>
<span class="t" style="left:910.60px;top:1033.80px;line-height:40px;font-size:28.02px;letter-spacing:0.012px;">Prepared Transactions</span>
<span class="t" style="left:1232.00px;top:1034.20px;line-height:40px;font-size:27.5px;">Configuration</span>
<div class="abs" style="left:3031px;top:1023px;width:2px;height:62px;background:#dde0e6"></div>
<div class="abs" style="left:3745px;top:1023px;width:2px;height:62px;background:#dde0e6"></div>
<svg class="abs" style="left:0;top:0" width="1" height="1"><circle cx="3068.34" cy="1052.14" r="9.04" fill="none" stroke="#222" stroke-width="4.6"/><path d="M3075.39 1059.19 L3082.33 1066.13" stroke="#222" stroke-width="5.199999999999999" stroke-linecap="round"/></svg>
<span class="t" style="left:3130.80px;top:1034.10px;line-height:40px;font-size:27.5px;letter-spacing:-0.048px;color:#697690;">Search</span>
<svg class="abs" style="left:0;top:0" width="1" height="1"><path d="M3773.81 1051.83 A11.3 11.3 0 0 1 3793.90 1046.44" fill="none" stroke="#212529" stroke-width="4.2"/><path d="M3796.19 1054.97 A11.3 11.3 0 0 1 3776.10 1060.36" fill="none" stroke="#212529" stroke-width="4.2"/><path d="M3798.30 1041.30 V1050.70 H3789.10 Z" fill="#212529" stroke="#212529" stroke-width="0.8" stroke-linejoin="round"/><path d="M3771.40 1065.30 V1055.90 H3780.50 Z" fill="#212529" stroke="#212529" stroke-width="0.8" stroke-linejoin="round"/></svg>
<div class="abs" style="left:641px;top:1103px;width:3166px;height:456px;background:#fff;border:2px solid #dde0e6;border-radius:9px"></div>
<div class="abs" style="left:692.0px;top:1105px;width:2px;height:448px;background:#dde0e6"></div>
<div class="abs" style="left:742.0px;top:1105px;width:2px;height:448px;background:#dde0e6"></div>
<div class="abs" style="left:792.0px;top:1105px;width:2px;height:448px;background:#dde0e6"></div>
<div class="abs" style="left:911.0px;top:1105px;width:2px;height:448px;background:#dde0e6"></div>
<div class="abs" style="left:1159.0px;top:1105px;width:2px;height:448px;background:#dde0e6"></div>
<div class="abs" style="left:1318.4px;top:1105px;width:2px;height:448px;background:#dde0e6"></div>
<div class="abs" style="left:1858.0px;top:1105px;width:2px;height:448px;background:#dde0e6"></div>
<div class="abs" style="left:2107.0px;top:1105px;width:2px;height:448px;background:#dde0e6"></div>
<div class="abs" style="left:2660.0px;top:1105px;width:2px;height:448px;background:#dde0e6"></div>
<div class="abs" style="left:2817.0px;top:1105px;width:2px;height:448px;background:#dde0e6"></div>
<div class="abs" style="left:3464.0px;top:1105px;width:2px;height:448px;background:#dde0e6"></div>
<div class="abs" style="left:643px;top:1195px;width:3162px;height:2px;background:#dde0e6"></div>
<div class="abs" style="left:643px;top:1255px;width:3162px;height:2px;background:#dde0e6"></div>
<div class="abs" style="left:643px;top:1315px;width:3162px;height:2px;background:#dde0e6"></div>
<div class="abs" style="left:643px;top:1375px;width:3162px;height:2px;background:#dde0e6"></div>
<div class="abs" style="left:643px;top:1435px;width:3162px;height:2px;background:#dde0e6"></div>
<div class="abs" style="left:643px;top:1495px;width:3162px;height:2px;background:#dde0e6"></div>
<span class="t b" style="left:802.00px;top:1130.20px;line-height:40px;font-size:27.09px;font-weight:700;letter-spacing:-0.192px;">PID</span>
<span class="t b" style="left:921.20px;top:1130.20px;line-height:40px;font-size:27.5px;font-weight:700;letter-spacing:0.173px;">Database</span>
<span class="t b" style="left:1169.20px;top:1130.20px;line-height:40px;font-size:27.5px;font-weight:700;">User</span>
<span class="t b" style="left:1329.00px;top:1130.20px;line-height:40px;font-size:27.5px;font-weight:700;">Application</span>
<span class="t b" style="left:1868.00px;top:1130.20px;line-height:40px;font-size:27.5px;font-weight:700;">Client</span>
<span class="t b" style="left:2117.00px;top:1130.20px;line-height:40px;font-size:27.5px;font-weight:700;">Backend start</span>
<span class="t b" style="left:2670.60px;top:1130.20px;line-height:40px;font-size:27.5px;font-weight:700;letter-spacing:0.062px;">State</span>
<span class="t b" style="left:2827.20px;top:1130.20px;line-height:40px;font-size:27.5px;font-weight:700;letter-spacing:-0.161px;">Wait event</span>
<span class="t b" style="left:3474.00px;top:1130.20px;line-height:40px;font-size:27.09px;font-weight:700;letter-spacing:-0.134px;">Blocking PIDs</span>
<svg class="abs" style="left:653.5px;top:1211.8px" width="28" height="28" viewBox="0 0 28 28"><circle cx="13.7" cy="13.7" r="13.6" fill="#cc0000"/><path d="M9.1 9.1 L18.3 18.3 M18.3 9.1 L9.1 18.3" stroke="#fff" stroke-width="4.7" stroke-linecap="butt"/></svg>
<div class="abs" style="left:705.4px;top:1213.2px;width:24.6px;height:24.6px;border-radius:3.4px;background:#222"></div>
<svg class="abs" style="left:762.6px;top:1217.4px" width="10" height="17"><path d="M0.6 0.6 L9.4 8.4 L0.6 16.2 Z" fill="#222" stroke="#222" stroke-width="1" stroke-linejoin="round"/></svg>
<span class="t" style="left:802.20px;top:1206.20px;line-height:40px;font-size:26.26px;letter-spacing:-0.999px;">41</span>
<span class="t" style="left:2116.20px;top:1206.20px;line-height:40px;font-size:27.5px;letter-spacing:-0.107px;">2021-08-20 13:32:54 UTC</span>
<span class="t" style="left:2827.20px;top:1206.20px;line-height:40px;font-size:28.14px;letter-spacing:0.019px;">Activity: CheckpointerMain</span>
<svg class="abs" style="left:653.5px;top:1271.8px" width="28" height="28" viewBox="0 0 28 28"><circle cx="13.7" cy="13.7" r="13.6" fill="#cc0000"/><path d="M9.1 9.1 L18.3 18.3 M18.3 9.1 L9.1 18.3" stroke="#fff" stroke-width="4.7" stroke-linecap="butt"/></svg>
<div class="abs" style="left:705.4px;top:1273.2px;width:24.6px;height:24.6px;border-radius:3.4px;background:#222"></div>
<svg class="abs" style="left:762.6px;top:1277.4px" width="10" height="17"><path d="M0.6 0.6 L9.4 8.4 L0.6 16.2 Z" fill="#222" stroke="#222" stroke-width="1" stroke-linejoin="round"/></svg>
<span class="t" style="left:802.20px;top:1266.20px;line-height:40px;font-size:26.26px;letter-spacing:-0.999px;">42</span>
<span class="t" style="left:2116.20px;top:1266.20px;line-height:40px;font-size:27.5px;letter-spacing:-0.107px;">2021-08-20 13:32:54 UTC</span>
<span class="t" style="left:2827.20px;top:1266.20px;line-height:40px;font-size:28.14px;letter-spacing:0.024px;">Activity: BgWriterMain</span>
<svg class="abs" style="left:653.5px;top:1331.8px" width="28" height="28" viewBox="0 0 28 28"><circle cx="13.7" cy="13.7" r="13.6" fill="#cc0000"/><path d="M9.1 9.1 L18.3 18.3 M18.3 9.1 L9.1 18.3" stroke="#fff" stroke-width="4.7" stroke-linecap="butt"/></svg>
<div class="abs" style="left:705.4px;top:1333.2px;width:24.6px;height:24.6px;border-radius:3.4px;background:#222"></div>
<svg class="abs" style="left:762.6px;top:1337.4px" width="10" height="17"><path d="M0.6 0.6 L9.4 8.4 L0.6 16.2 Z" fill="#222" stroke="#222" stroke-width="1" stroke-linejoin="round"/></svg>
<span class="t" style="left:802.20px;top:1326.20px;line-height:40px;font-size:26.26px;letter-spacing:-0.999px;">43</span>
<span class="t" style="left:2116.20px;top:1326.20px;line-height:40px;font-size:27.5px;letter-spacing:-0.107px;">2021-08-20 13:32:54 UTC</span>
<span class="t" style="left:2827.20px;top:1326.20px;line-height:40px;font-size:28.18px;letter-spacing:0.021px;">Activity: WalWriterMain</span>
<svg class="abs" style="left:653.5px;top:1391.8px" width="28" height="28" viewBox="0 0 28 28"><circle cx="13.7" cy="13.7" r="13.6" fill="#cc0000"/><path d="M9.1 9.1 L18.3 18.3 M18.3 9.1 L9.1 18.3" stroke="#fff" stroke-width="4.7" stroke-linecap="butt"/></svg>
<div class="abs" style="left:705.4px;top:1393.2px;width:24.6px;height:24.6px;border-radius:3.4px;background:#222"></div>
<svg class="abs" style="left:762.6px;top:1397.4px" width="10" height="17"><path d="M0.6 0.6 L9.4 8.4 L0.6 16.2 Z" fill="#222" stroke="#222" stroke-width="1" stroke-linejoin="round"/></svg>
<span class="t" style="left:802.20px;top:1386.20px;line-height:40px;font-size:26.26px;letter-spacing:-0.999px;">44</span>
<span class="t" style="left:2116.20px;top:1386.20px;line-height:40px;font-size:27.5px;letter-spacing:-0.107px;">2021-08-20 13:32:54 UTC</span>
<span class="t" style="left:2827.20px;top:1386.20px;line-height:40px;font-size:28.43px;letter-spacing:0.025px;">Activity: AutoVacuumMain</span>
<svg class="abs" style="left:653.5px;top:1451.8px" width="28" height="28" viewBox="0 0 28 28"><circle cx="13.7" cy="13.7" r="13.6" fill="#cc0000"/><path d="M9.1 9.1 L18.3 18.3 M18.3 9.1 L9.1 18.3" stroke="#fff" stroke-width="4.7" stroke-linecap="butt"/></svg>
<div class="abs" style="left:705.4px;top:1453.2px;width:24.6px;height:24.6px;border-radius:3.4px;background:#222"></div>
<svg class="abs" style="left:762.6px;top:1457.4px" width="10" height="17"><path d="M0.6 0.6 L9.4 8.4 L0.6 16.2 Z" fill="#222" stroke="#222" stroke-width="1" stroke-linejoin="round"/></svg>
<span class="t" style="left:802.20px;top:1446.20px;line-height:40px;font-size:26.26px;letter-spacing:-0.999px;">46</span>
<span class="t" style="left:1168.80px;top:1446.20px;line-height:40px;font-size:28.46px;letter-spacing:0.457px;">admin</span>
<span class="t" style="left:2116.20px;top:1446.20px;line-height:40px;font-size:27.5px;letter-spacing:-0.107px;">2021-08-20 13:32:54 UTC</span>
<span class="t" style="left:2827.20px;top:1446.20px;line-height:40px;font-size:28.19px;letter-spacing:0.014px;">Activity: LogicalLauncherMain</span>
<svg class="abs" style="left:653.5px;top:1511.8px" width="28" height="28" viewBox="0 0 28 28"><circle cx="13.7" cy="13.7" r="13.6" fill="#cc0000"/><path d="M9.1 9.1 L18.3 18.3 M18.3 9.1 L9.1 18.3" stroke="#fff" stroke-width="4.7" stroke-linecap="butt"/></svg>
<div class="abs" style="left:705.4px;top:1513.2px;width:24.6px;height:24.6px;border-radius:3.4px;background:#222"></div>
<svg class="abs" style="left:762.6px;top:1517.4px" width="10" height="17"><path d="M0.6 0.6 L9.4 8.4 L0.6 16.2 Z" fill="#222" stroke="#222" stroke-width="1" stroke-linejoin="round"/></svg>
<span class="t" style="left:801.20px;top:1506.20px;line-height:40px;font-size:26.26px;">96</span>
<span class="t" style="left:920.40px;top:1506.20px;line-height:40px;font-size:28.46px;letter-spacing:0.028px;">postgres</span>
<span class="t" style="left:1168.80px;top:1506.20px;line-height:40px;font-size:28.46px;letter-spacing:0.457px;">admin</span>
<span class="t" style="left:1327.00px;top:1506.20px;line-height:40px;font-size:27.5px;letter-spacing:0.087px;">pgAdmin 4 - DB:postgres</span>
<span class="t" style="left:1866.80px;top:1506.20px;line-height:40px;font-size:28.13px;letter-spacing:0.034px;">172.20.0.3</span>
<span class="t" style="left:2116.20px;top:1506.20px;line-height:40px;font-size:27.5px;letter-spacing:-0.107px;">2021-08-20 14:22:10 UTC</span>
<span class="t" style="left:2669.30px;top:1506.20px;line-height:40px;font-size:28.3px;letter-spacing:0.083px;">active</span>
<div class="abs" style="left:1218px;top:268px;width:1404px;height:1104px;background:#ebeef3;border:2px solid #dde0e6;border-radius:9px;box-shadow:0 16px 96px #848ea0"></div>
<div class="abs" style="left:1220px;top:270px;width:1400px;height:62px;background:#fff;border-radius:7px 7px 0 0"></div>
<div class="abs" style="left:1220px;top:332px;width:1400px;height:2px;background:#dde0e6"></div>
<svg class="abs" style="left:1245.8px;top:289.90px" width="28" height="25.8" viewBox="0 0 28 26" preserveAspectRatio="none"><path d="M0 12 V20.8 A14 5.1 0 0 0 28 20.8 V12 Z" fill="#a9922f"/><path d="M0 10 V17.3 A14 5.1 0 0 0 28 17.3 V10 Z" fill="#fafad2"/><path d="M0 6 V11.5 A14 5.1 0 0 0 28 11.5 V6 Z" fill="#a9922f"/><path d="M0 5 V8.4 A14 5.1 0 0 0 28 8.4 V5 Z" fill="#fafad2"/><ellipse cx="14" cy="5.3" rx="14" ry="5.25" fill="#a9922f"/></svg>
<span class="t b" style="left:1280.30px;top:281.00px;line-height:40px;font-size:27.5px;font-weight:700;letter-spacing:-0.083px;">Create - Database</span>
<svg class="abs" style="left:2527.5px;top:288.9px" width="25" height="25" viewBox="0 0 25 25"><path d="M15.4 0.4 H24.4 V9.4 Z M0.4 15.8 V24.8 H9.4 Z" fill="#222" stroke="#222" stroke-width="0.8" stroke-linejoin="round"/><path d="M20.4 4.4 L14.8 10 M4.4 20.8 L10 15.2" stroke="#222" stroke-width="3.8" stroke-linecap="round" fill="none"/></svg>
<svg class="abs" style="left:0;top:0" width="1" height="1"><path d="M2580.8 294.5 L2594.8 308.5 M2594.8 294.5 L2580.8 308.5" stroke="#222" stroke-width="5.3" stroke-linecap="round" fill="none"/></svg>
<div class="abs" style="left:1220px;top:334px;width:1400px;height:62px;background:#fff"></div>
<div class="abs" style="left:1220px;top:396px;width:1400px;height:2px;background:#dde0e6"></div>
<div class="ul" style="left:1220px;top:390px;width:135px"></div>
<span class="t" style="left:1240.10px;top:345.30px;line-height:40px;font-size:26.54px;letter-spacing:-0.016px;color:#326690;">General</span>
<span class="t" style="left:1374.10px;top:345.30px;line-height:40px;font-size:28.46px;letter-spacing:0.189px;">Definition</span>
<span class="t" style="left:1533.00px;top:345.30px;line-height:40px;font-size:27.5px;letter-spacing:0.059px;">Security</span>
<span class="t" style="left:1672.30px;top:345.30px;line-height:40px;font-size:28.21px;letter-spacing:-0.074px;">Parameters</span>
<span class="t" style="left:1857.40px;top:345.30px;line-height:40px;font-size:28.02px;letter-spacing:0.039px;">Advanced</span>
<span class="t" style="left:2019.80px;top:345.30px;line-height:40px;font-size:26.26px;letter-spacing:-0.013px;">SQL</span>
<span class="t" style="left:1245.00px;top:424.80px;line-height:40px;font-size:27.5px;letter-spacing:0.110px;">Database</span>
<span class="t" style="left:1246.00px;top:503.00px;line-height:40px;font-size:27.04px;letter-spacing:-0.028px;">Owner</span>
<span class="t" style="left:1246.00px;top:581.00px;line-height:40px;font-size:28.04px;letter-spacing:0.031px;">Comment</span>
<div class="abs" style="left:1578.4px;top:414.2px;width:1025.4px;height:61px;background:#fff;border:2px solid #dde0e6;border-radius:8px"></div>
<span class="t" style="left:1603.90px;top:424.80px;line-height:40px;font-size:28.46px;letter-spacing:-0.029px;">directus</span>
<div class="abs" style="left:1578.4px;top:492.3px;width:1025.4px;height:61px;background:#fff;border:2px solid #dde0e6;border-radius:8px"></div>
<svg class="abs" style="left:0;top:0" width="1" height="1"><path d="M1614.45 534.40 A13.60 13.06 0 0 1 1641.65 534.40 Z" fill="#c3e3f3" stroke="#2b63c4" stroke-width="1.7" stroke-linejoin="miter"/><circle cx="1628.05" cy="518.08" r="6.66" fill="#c3e3f3" stroke="#2b63c4" stroke-width="1.7"/></svg>
<span class="t" style="left:1651.00px;top:503.00px;line-height:40px;font-size:28.46px;letter-spacing:-0.029px;">directus</span>
<svg class="abs" style="left:2574px;top:518.9px" width="16" height="10"><path d="M0 0 H16 L8 9.8 Z" fill="#888"/></svg>
<div class="abs" style="left:1578.4px;top:570.4px;width:1025.4px;height:229.5px;background:#fff;border:2px solid #dde0e6;border-radius:8px"></div>
<svg class="abs" style="left:0;top:0" width="1" height="1"><path d="M2575.4 795.3 L2599.4 771.7 M2582.5 795.3 L2599.4 778.7 M2589.5 795.3 L2599.4 785.7 M2596.5 795.3 L2599.4 792.6" stroke="#6e6e6e" stroke-width="1.9" stroke-linecap="round" fill="none"/></svg>
<div class="abs" style="left:1220px;top:1274px;width:1400px;height:2px;background:#dde0e6"></div>
<div class="abs" style="left:1220px;top:1276px;width:1400px;height:94px;background:#fff;border-radius:0 0 7px 7px"></div>
<div class="abs" style="left:1244px;top:1292px;width:62.4px;height:62px;background:#fff;border:2px solid #b3bdd1;border-radius:9px"></div>
<div class="abs" style="left:1323px;top:1292px;width:72.6px;height:62px;background:#fff;border:2px solid #b3bdd1;border-radius:9px"></div>
<div class="abs" style="left:2100.4px;top:1292px;width:162.4px;height:62px;background:#fff;border:2px solid #b3bdd1;border-radius:9px"></div>
<div class="abs" style="left:2279px;top:1292px;width:157.6px;height:62px;background:#fff;border:2px solid #b3bdd1;border-radius:9px"></div>
<div class="abs" style="left:2453px;top:1292px;width:143px;height:62px;background:#326690;border-radius:9px"></div>
<svg class="abs" style="left:0;top:0" width="1" height="1"><circle cx="1275.1" cy="1312.4" r="4.1" fill="#212529"/><path d="M1270.2 1319.2 H1278.4 V1332.2 H1280.4 V1336.5 H1270.2 V1332.2 H1272.2 V1323.6 H1270.2 Z" fill="#212529" stroke="#212529" stroke-width="0.6" stroke-linejoin="round"/></svg>
<svg class="abs" style="left:0;top:0" width="1" height="1"><path d="M1352.0 1315.0 C1354.2 1311.8 1356.8 1310.8 1360 1310.8 C1364.2 1310.8 1366.7 1313.2 1366.7 1316.2 C1366.7 1319 1364.8 1320.4 1362.6 1321.8 C1360.2 1323.2 1359 1324.4 1359 1326.8" fill="none" stroke="#212529" stroke-width="5.3" stroke-linejoin="round"/><circle cx="1359" cy="1332.9" r="4.1" fill="#212529"/></svg>
<svg class="abs" style="left:0;top:0" width="1" height="1"><path d="M2128.7999999999997 1315.6000000000001 L2142.4 1329.2 M2142.4 1315.6000000000001 L2128.7999999999997 1329.2" stroke="#222" stroke-width="5.2" stroke-linecap="round" fill="none"/></svg>
<span class="t" style="left:2152.40px;top:1302.60px;line-height:40px;font-size:27.5px;letter-spacing:-0.178px;">Cancel</span>
<svg class="abs" style="left:0;top:0" width="1" height="1"><g transform="translate(2319.1 1322.8000000000002) rotate(0) scale(1.27)"><path d="M-3.55 -5.35 L-1.25 -9.33 Q0 -11.5 1.25 -9.33 L3.0 -6.3" fill="none" stroke="#222" stroke-width="2.7" stroke-linejoin="round" stroke-linecap="round"/><path d="M5.1 -2.9 L6.2 -8.6 L-0.4 -4.8 Z" fill="#222" stroke="#222" stroke-width="0.8" stroke-linejoin="round"/></g><g transform="translate(2319.1 1322.8000000000002) rotate(120) scale(1.27)"><path d="M-3.55 -5.35 L-1.25 -9.33 Q0 -11.5 1.25 -9.33 L3.0 -6.3" fill="none" stroke="#222" stroke-width="2.7" stroke-linejoin="round" stroke-linecap="round"/><path d="M5.1 -2.9 L6.2 -8.6 L-0.4 -4.8 Z" fill="#222" stroke="#222" stroke-width="0.8" stroke-linejoin="round"/></g><g transform="translate(2319.1 1322.8000000000002) rotate(240) scale(1.27)"><path d="M-3.55 -5.35 L-1.25 -9.33 Q0 -11.5 1.25 -9.33 L3.0 -6.3" fill="none" stroke="#222" stroke-width="2.7" stroke-linejoin="round" stroke-linecap="round"/><path d="M5.1 -2.9 L6.2 -8.6 L-0.4 -4.8 Z" fill="#222" stroke="#222" stroke-width="0.8" stroke-linejoin="round"/></g></svg>
<span class="t" style="left:2339.90px;top:1302.60px;line-height:40px;font-size:26.68px;letter-spacing:-0.041px;">Reset</span>
<svg class="abs" style="left:2478.6px;top:1310.2px" width="25" height="25" viewBox="0 0 25 25"><path d="M2.6 0 H18 L25 7 V22.4 C25 23.8 23.8 25 22.4 25 H2.6 C1.2 25 0 23.8 0 22.4 V2.6 C0 1.2 1.2 0 2.6 0 Z" fill="#fff"/><rect x="3.6" y="3.6" width="13.4" height="6.6" fill="#326690"/><circle cx="12.5" cy="17.4" r="3.7" fill="#326690"/></svg>
<span class="t" style="left:2510.00px;top:1303.00px;line-height:40px;font-size:26.26px;letter-spacing:0.122px;color:#fff;">Save</span>
<script>(function(){var w=window.innerWidth;if(w&&w<3700){document.documentElement.style.zoom=w/3840;}})();</script>
</body>
</html>
